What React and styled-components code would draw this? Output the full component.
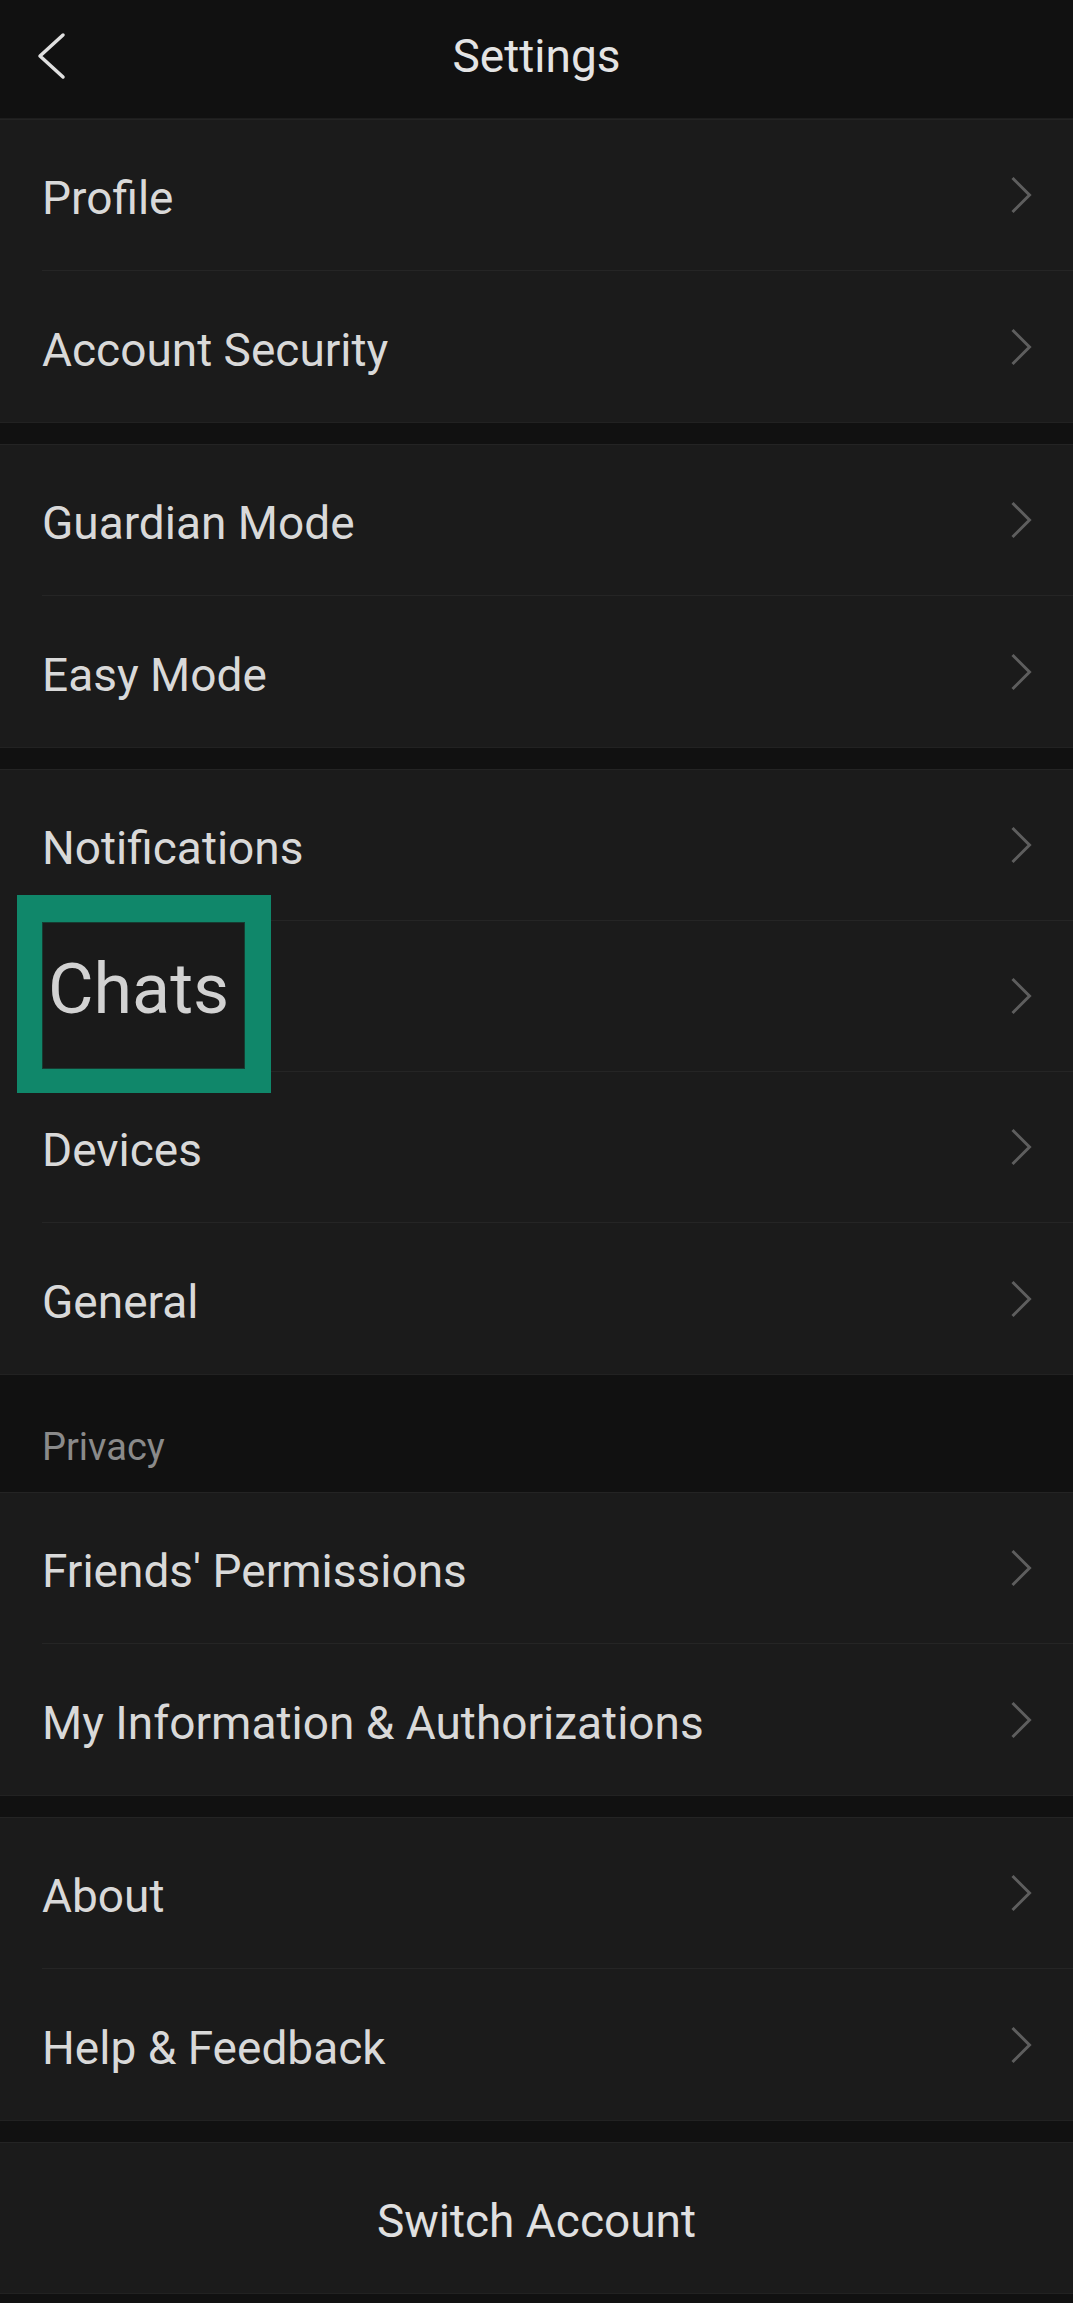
import styled, { createGlobalStyle } from 'styled-components'

const GlobalStyle = createGlobalStyle`
    html, body {
        margin: 0;
        padding: 0;
        background-color: #111111;
    }
    * {
        box-sizing: border-box;
    }
`

const Screen = styled.div`
    width: 100%;
    min-height: 100vh;
    background-color: #111111;
    font-family: Roboto, "Noto Sans", "Liberation Sans", sans-serif;
    color: #d8d8d8;
`
const Header = styled.header`
    height: 119px;
    padding-bottom: 6px;
    display: grid;
    grid-template-columns: 1fr auto 1fr;
    align-items: center;
    background-color: #111111;
    border-bottom: 1px solid #1e1e1e;
`
const BackButton = styled.button`
    justify-self: start;
    margin-left: 36px;
    padding: 0;
    border: none;
    background: none;
    display: flex;
    cursor: pointer;
`
const Title = styled.h1`
    margin: 0;
    font-size: 46px;
    font-weight: 400;
    line-height: 46px;
    color: #e4e4e4;
`
const Group = styled.section`
    margin-top: ${p => (p.$flush ? '0' : '21px')};
    background-color: #1b1b1b;
    border-top: 1px solid #242424;
    border-bottom: 1px solid #222222;
`
const Row = styled.div`
    position: relative;
    height: 151px;
    padding-left: 42px;
    display: flex;
    cursor: pointer;
`
const RowBody = styled.div`
    flex: 1;
    display: flex;
    align-items: center;
    justify-content: space-between;
    padding-right: 41px;
    border-bottom: 1px solid #252525;

    ${Row}:last-child & {
        border-bottom: none;
    }
`
const Label = styled.span`
    padding-top: 6px;
    font-size: 46px;
    line-height: 46px;
    color: #d9d9d9;
`
const SectionLabel = styled.div`
    height: 117px;
    padding: 53px 0 0 42px;
    font-size: 38px;
    line-height: 38px;
    color: #8a8a8a;
    background-color: #111111;
`
const CenterButton = styled.div`
    height: 150px;
    padding-top: 6px;
    display: flex;
    align-items: center;
    justify-content: center;
    font-size: 46px;
    line-height: 46px;
    color: #e0e0e0;
    cursor: pointer;
`
// the zoomed call-out drawn over the Chats row
const Highlight = styled.div`
    position: absolute;
    left: 17px;
    top: -26px;
    width: 254px;
    height: 198px;
    border-style: solid;
    border-color: #10876a;
    border-width: 27px 26px 24px 25px;
    background-color: #1a1a1a;
    box-shadow: inset 0 0 0 1px #163c31;
    padding: 31px 0 0 6px;
    font-size: 70px;
    line-height: 72px;
    color: #d2d2d2;
    z-index: 2;
`

const Chevron = () => (
    <svg width="22" height="40" viewBox="0 0 22 40" fill="none">
        <polyline points="2.5,3 19.5,20 2.5,37" stroke="#5e5e5e" strokeWidth="3" strokeLinejoin="miter" />
    </svg>
)

const BackIcon = () => (
    <svg width="30" height="48" viewBox="0 0 30 48" fill="none">
        <polyline points="27,3 4,24 27,45" stroke="#e0e0e0" strokeWidth="3.5" strokeLinecap="round" strokeLinejoin="round" />
    </svg>
)

const groups = [
    ['Profile', 'Account Security'],
    ['Guardian Mode', 'Easy Mode'],
    ['Notifications', 'Chats', 'Devices', 'General'],
]
const privacy = ["Friends' Permissions", 'My Information & Authorizations']
const more = ['About', 'Help & Feedback']

function Item({ label }) {
    const zoomed = label === 'Chats'
    return (
        <Row>
            {zoomed && <Highlight>{label}</Highlight>}
            <RowBody>
                {zoomed ? <span /> : <Label>{label}</Label>}
                <Chevron />
            </RowBody>
        </Row>
    )
}

function App() {
    return (
        <Screen>
            <GlobalStyle />
            <Header>
                <BackButton aria-label="Back"><BackIcon /></BackButton>
                <Title>Settings</Title>
                <span />
            </Header>

            {groups.map((items, i) => (
                <Group key={i} $flush={i === 0}>
                    {items.map(l => <Item key={l} label={l} />)}
                </Group>
            ))}

            <SectionLabel>Privacy</SectionLabel>
            <Group $flush>
                {privacy.map(l => <Item key={l} label={l} />)}
            </Group>

            <Group>
                {more.map(l => <Item key={l} label={l} />)}
            </Group>

            <Group>
                <CenterButton>Switch Account</CenterButton>
            </Group>
        </Screen>
    )
}

export default App
